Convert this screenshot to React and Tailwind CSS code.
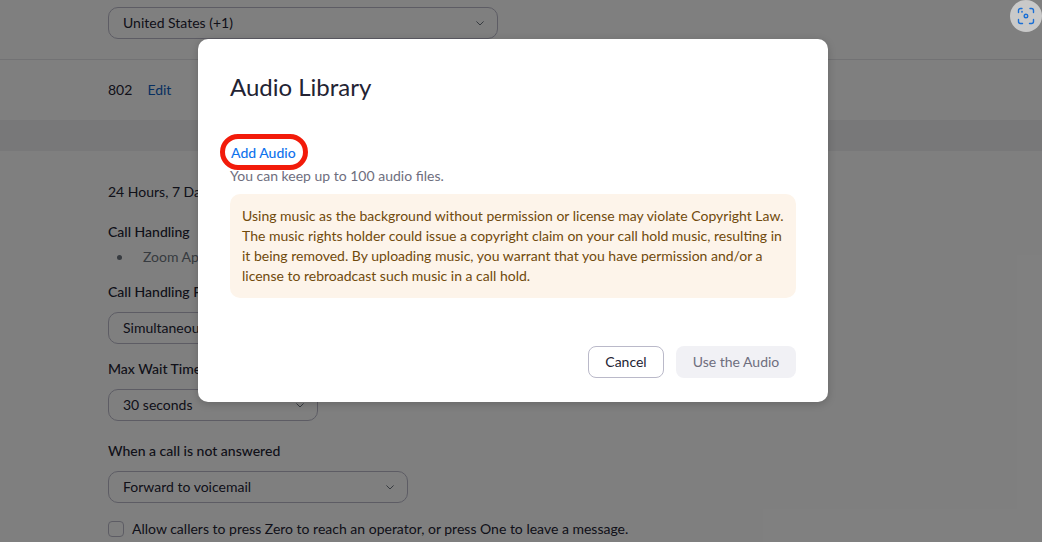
import React from "react";

function Chevron({ className = "" }) {
  return (
    <svg width="8" height="5" viewBox="0 0 8 5" fill="none" className={className}>
      <path d="M.7.7 4 4 7.3.7" stroke="#6e7680" strokeWidth="1" strokeLinecap="round" strokeLinejoin="round" />
    </svg>
  );
}

function Select({ label, width }) {
  return (
    <div className={`flex h-8 ${width} items-center justify-between rounded-[10px] border border-[#bab9c9] bg-white pl-[14px] pr-[13px] text-sm text-[#232333]`}>
      <span>{label}</span>
      <Chevron />
    </div>
  );
}

export default function App() {
  return (
    <div className="relative h-[542px] w-[1042px] overflow-hidden bg-white font-['Lato',sans-serif] text-sm text-[#232333]">
      <div className="flex h-full flex-col">
        <div className="h-[60px] shrink-0 border-b border-[#e4e4e8] pl-[108px] pt-[7px]">
          <Select label="United States (+1)" width="w-[390px]" />
        </div>
        <div className="flex h-[60px] shrink-0 items-center gap-[15px] pl-[108px]">
          <span>802</span>
          <span className="text-[#0e5fc2]">Edit</span>
        </div>
        <div className="h-[31px] shrink-0 bg-[#f0f0f2]" />
        <div className="flex flex-col pl-[108px] pt-[31px]">
          <div className="leading-5">24 Hours, 7 Days</div>
          <div className="mt-5 font-medium leading-5">Call Handling</div>
          <div className="mt-[5px] flex items-center leading-5 text-[#6e7680]">
            <span className="ml-[9px] mr-[21px] size-[5px] rounded-full bg-[#6e7680]" />
            <span>Zoom Apps</span>
          </div>
          <div className="mt-[15px] font-medium leading-5">Call Handling Policy</div>
          <div className="mt-[10px]"><Select label="Simultaneous" width="w-[300px]" /></div>
          <div className="mt-[15px] font-medium leading-5">Max Wait Time</div>
          <div className="mt-[10px]"><Select label="30 seconds" width="w-[210px]" /></div>
          <div className="mt-5 font-medium leading-5">When a call is not answered</div>
          <div className="mt-[10px]"><Select label="Forward to voicemail" width="w-[300px]" /></div>
          <label className="mt-4 flex items-center gap-2 leading-5">
            <span className="size-4 rounded-[4px] border border-[#bab9c9] bg-white" />
            <span>Allow callers to press Zero to reach an operator, or press One to leave a message.</span>
          </label>
        </div>
      </div>

      <div className="absolute inset-0 bg-black/50" />

      <div className="absolute right-0 top-0 flex size-8 items-center justify-center rounded-full bg-[#c9c9c9]">
        <svg width="18" height="18" viewBox="0 0 18 18" fill="none" stroke="#1a6fd6" strokeWidth="1.4" strokeLinecap="round">
          <path d="M1.500 5.500v-2a2 2 0 0 1 2-2h1.500" />
          <path d="M13 1.500h1.500a2 2 0 0 1 2 2v2" />
          <path d="M1.500 12.500v2a2 2 0 0 0 2 2h2" />
          <path d="M12.500 16.500h2a2 2 0 0 0 2-2v-2" />
          <circle cx="9" cy="9" r="1.800" />
          <circle cx="5" cy="4.800" r="0.300" />
        </svg>
      </div>

      <div className="absolute left-[198px] top-[39px] flex h-[363px] w-[630px] flex-col rounded-[10px] bg-white pl-8 pr-8 shadow-[0_2px_8px_rgba(0,0,0,0.2)]">
        <h2 className="mt-[30px] text-[24px] font-normal leading-9 text-[#232333]">Audio Library</h2>
        <div className="relative mt-[38px] self-start pl-px text-sm font-medium leading-5 text-[#0e72ed]">
          Add Audio
          <span className="absolute -left-[10px] -top-[9px] h-[36px] w-[88px] rounded-[18px] border-[5px] border-[#f21b0a]" />
        </div>
        <p className="mt-[4px] text-sm leading-[18px] text-[#6e6e7e]">You can keep up to 100 audio files.</p>
        <div className="mt-[9px] rounded-[10px] bg-[#fdf4ea] px-3 py-3 text-sm leading-5 text-[#704a0c]">
          Using music as the background without permission or license may violate Copyright Law. The music rights holder could issue a copyright claim on your call hold music, resulting in it being removed. By uploading music, you warrant that you have permission and/or a license to rebroadcast such music in a call hold.
        </div>
        <div className="mt-[48px] flex justify-end gap-3">
          <button className="h-8 w-[76px] rounded-[8px] border border-[#bab9c9] bg-white text-sm text-[#232333]">Cancel</button>
          <button className="h-8 w-[120px] rounded-[8px] bg-[#f1f1f5] text-sm text-[#6e6e7e]">Use the Audio</button>
        </div>
      </div>
    </div>
  );
}
